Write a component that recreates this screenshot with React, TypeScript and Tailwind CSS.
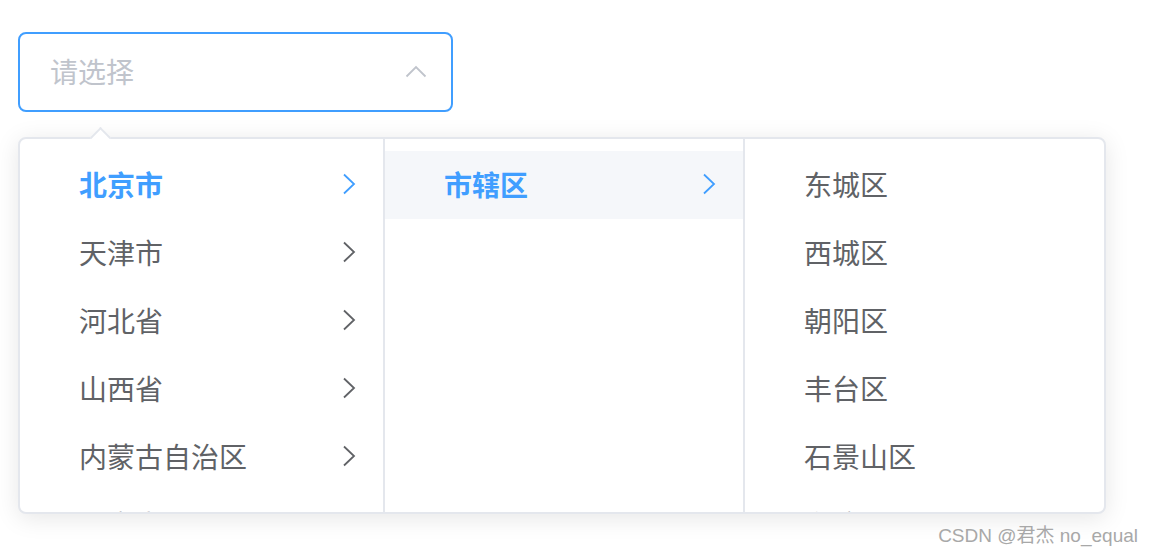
import React from "react";

const provinces = ["北京市", "天津市", "河北省", "山西省", "内蒙古自治区", "辽宁省"];
const cities = ["市辖区"];
const districts = ["东城区", "西城区", "朝阳区", "丰台区", "石景山区", "海淀区"];

function ChevronRight({ color }: { color: string }) {
  return (
    <svg width="14" height="22" viewBox="0 0 14 22" fill="none">
      <path d="M2 1.5 L12 11 L2 20.5" stroke={color} strokeWidth="1.8" strokeLinejoin="miter" />
    </svg>
  );
}

function ChevronUp() {
  return (
    <svg width="22" height="14" viewBox="0 0 22 14" fill="none">
      <path d="M1.5 12.5 L11 3 L20.5 12.5" stroke="#c0c4cc" strokeWidth="1.8" />
    </svg>
  );
}

function Node({ label, active, hover, arrow }: { label: string; active?: boolean; hover?: boolean; arrow?: boolean }) {
  return (
    <div className={`relative flex items-center h-[68px] pl-[59px] pr-[60px] pb-[3px] ${hover ? "bg-[#f5f7fa]" : ""}`}>
      <span className={`text-[28px] leading-none ${active ? "text-[#409eff] font-bold" : "text-[#606266]"}`}>{label}</span>
      {arrow && (
        <span className="absolute right-[27px] top-[22px] flex">
          <ChevronRight color={active ? "#409eff" : "#606266"} />
        </span>
      )}
    </div>
  );
}

export default function App() {
  return (
    <div className="relative w-[1153px] h-[554px] bg-white overflow-hidden" style={{ fontFamily: '"Noto Sans CJK SC", "Noto Sans", sans-serif' }}>
      <div className="pt-[32px] pl-[18px]">
        <div className="w-[435px] h-[80px] border-2 border-[#409eff] rounded-[8px] flex items-center pl-[30px] pr-[24px] pb-[2px] justify-between">
          <span className="text-[28px] text-[#c0c4cc] leading-none">请选择</span>
          <ChevronUp />
        </div>

        <div className="relative mt-[25px] w-[1088px]">
          <div className="absolute left-[75px] -top-[7px] w-[15px] h-[15px] rotate-45 bg-white border-l-2 border-t-2 border-[#e4e7ed] z-10" />
          <div className="flex h-[377px] border-2 border-[#e4e7ed] rounded-[8px] bg-white shadow-[0_4px_24px_rgba(0,0,0,0.1)] overflow-hidden">
            <div className="w-[365px] border-r-2 border-[#e4e7ed] pt-[12px]">
              {provinces.map((p, i) => (
                <Node key={p} label={p} active={i === 0} arrow />
              ))}
            </div>
            <div className="w-[360px] border-r-2 border-[#e4e7ed] pt-[12px]">
              {cities.map((c) => (
                <Node key={c} label={c} active hover arrow />
              ))}
            </div>
            <div className="flex-1 pt-[12px]">
              {districts.map((d) => (
                <Node key={d} label={d} />
              ))}
            </div>
          </div>
        </div>
      </div>

      <div className="absolute right-[15px] top-[526px] text-[19px] text-[#a8a8a8] leading-none" style={{ fontFamily: '"Liberation Sans", "Noto Sans CJK SC", sans-serif' }}>
        CSDN @君杰 no_equal
      </div>
    </div>
  );
}
